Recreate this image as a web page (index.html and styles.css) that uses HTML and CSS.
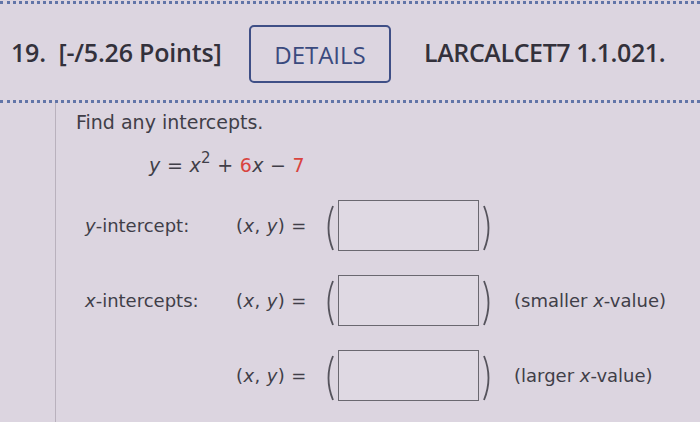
FILE: index.html
```html
<!DOCTYPE html>
<html>
<head>
    <title>LARCALCET7 1.1.021</title>
    <meta name="viewport" content="width=device-width, initial-scale=1">
    <link rel="stylesheet" href="styles.css">
</head>
<body>
    <div class="question">
        <div class="qhead">
            <span class="qnum">19.&nbsp; [-/5.26 Points]</span>
            <button class="details">DETAILS</button>
            <span class="qref">LARCALCET7 1.1.021.</span>
        </div>
        <div class="qbody">
            <p class="prompt">Find any intercepts.</p>
            <p class="eq"><i>y</i> = <i>x</i><sup>2</sup> + <span class="red">6</span><i>x</i> &minus; <span class="red">7</span></p>

            <div class="answers">
                <span class="label"><i>y</i>-intercept:</span>
                <span class="pair">(<i>x</i>, <i>y</i>) =</span>
                <span class="field">
                    <svg class="paren" viewBox="0 0 12 48"><path d="M10 2 Q1 24 10 46" /></svg>
                    <span class="box"></span>
                    <svg class="paren" viewBox="0 0 12 48"><path d="M2 2 Q11 24 2 46" /></svg>
                </span>
                <span class="note"></span>

                <span class="label"><i>x</i>-intercepts:</span>
                <span class="pair">(<i>x</i>, <i>y</i>) =</span>
                <span class="field">
                    <svg class="paren" viewBox="0 0 12 48"><path d="M10 2 Q1 24 10 46" /></svg>
                    <span class="box"></span>
                    <svg class="paren" viewBox="0 0 12 48"><path d="M2 2 Q11 24 2 46" /></svg>
                </span>
                <span class="note">(smaller <i>x</i>-value)</span>

                <span class="label"></span>
                <span class="pair">(<i>x</i>, <i>y</i>) =</span>
                <span class="field">
                    <svg class="paren" viewBox="0 0 12 48"><path d="M10 2 Q1 24 10 46" /></svg>
                    <span class="box"></span>
                    <svg class="paren" viewBox="0 0 12 48"><path d="M2 2 Q11 24 2 46" /></svg>
                </span>
                <span class="note">(larger <i>x</i>-value)</span>
            </div>
        </div>
    </div>
</body>
</html>
```

FILE: styles.css
```css
html {
    background-color: #dcd5e0;
}

body {
    margin: 0;
    color: #403e48;
    font-family: "DejaVu Sans", Verdana, sans-serif;
}

.question {
    border-top: 3px dotted #6275a8;
    margin-top: 1px;
    height: 421px;
    overflow: hidden;
}

.qhead {
    display: flex;
    align-items: center;
    height: 96px;
    padding-left: 11px;
    border-bottom: 3px dotted #6275a8;
    font-family: "Open Sans", sans-serif;
    font-size: 25px;
    color: #33313b;
}

.qnum {
    font-weight: 600;
    width: 238px;
    letter-spacing: -0.2px;
}

.details {
    width: 142px;
    height: 58px;
    margin-top: 4px;
    border: 2px solid #3f4f86;
    border-radius: 5px;
    background: transparent;
    font-family: "Open Sans", sans-serif;
    font-size: 24px;
    color: #3a4a7e;
    padding: 0;
}

.qref {
    margin-left: 33px;
    font-weight: 600;
    letter-spacing: -0.4px;
}

.qbody {
    margin-left: 55px;
    border-left: 1px solid #b9b1bd;
    padding-left: 20px;
    height: 330px;
}

.prompt {
    margin: 0;
    padding-top: 8px;
    font-size: 19px;
}

.eq {
    margin: 16px 0 0 73px;
    font-size: 19px;
    letter-spacing: 0.3px;
}

.eq sup {
    font-size: 15px;
    vertical-align: 9px;
}

.red {
    color: #d9443f;
}

.answers {
    display: grid;
    grid-template-columns: 151px 87px auto 1fr;
    grid-auto-rows: 75px;
    align-items: center;
    margin: 12px 0 0 9px;
    font-size: 18px;
}

.pair {
    letter-spacing: 0.4px;
}

.field {
    display: flex;
    align-items: center;
    gap: 3px;
}

.paren {
    width: 12px;
    height: 48px;
    margin-top: 5px;
}

.paren path {
    fill: none;
    stroke: #55535c;
    stroke-width: 1.8;
}

.box {
    width: 139px;
    height: 49px;
    border: 1.5px solid #6a6870;
    background-color: #dfd9e3;
}

.note {
    margin-left: 20px;
}
```
